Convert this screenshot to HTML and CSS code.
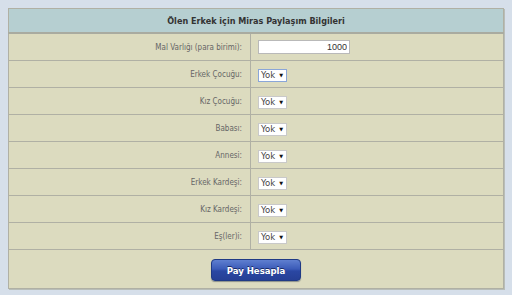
FILE: index.html
```html
<!DOCTYPE html>
<html>
<head>
<meta charset="utf-8">
<link rel="stylesheet" href="styles.css">
</head>
<body>
<table class="form">
  <tr><th colspan="2" class="title">Ölen Erkek için Miras Paylaşım Bilgileri</th></tr>
  <tr><td class="lbl">Mal Varlığı (para birimi):</td><td class="val"><input class="amount" type="text" value="1000"></td></tr>
  <tr><td class="lbl">Erkek Çocuğu:</td><td class="val"><span class="sel focus">Yok<i>▼</i></span></td></tr>
  <tr><td class="lbl">Kız Çocuğu:</td><td class="val"><span class="sel">Yok<i>▼</i></span></td></tr>
  <tr><td class="lbl">Babası:</td><td class="val"><span class="sel">Yok<i>▼</i></span></td></tr>
  <tr><td class="lbl">Annesi:</td><td class="val"><span class="sel">Yok<i>▼</i></span></td></tr>
  <tr><td class="lbl">Erkek Kardeşi:</td><td class="val"><span class="sel">Yok<i>▼</i></span></td></tr>
  <tr><td class="lbl">Kız Kardeşi:</td><td class="val"><span class="sel">Yok<i>▼</i></span></td></tr>
  <tr><td class="lbl">Eş(ler)i:</td><td class="val"><span class="sel">Yok<i>▼</i></span></td></tr>
  <tr><td colspan="2" class="btnrow"><button class="btn">Pay Hesapla</button></td></tr>
</table>
</body>
</html>
```
FILE: styles.css
```css
html, body { margin: 0; padding: 0; }
body {
  background: #d6dfea;
  padding: 8px;
  font-family: "DejaVu Sans Condensed", "DejaVu Sans", sans-serif;
  width: 496px;
}
.form {
  width: 496px;
  border-collapse: collapse;
  border: 1px solid #a9aba0;
  box-shadow: 1px 1px 0 #b8bdb8;
}
.form td, .form th {
  border: 1px solid #b0b0a4;
  padding: 0;
}
.title {
  background: #b6cfd1;
  height: 23px;
  font-size: 9px;
  font-weight: bold;
  color: #333;
  text-align: center;
  border-bottom: 2px solid #a9aba0 !important;
}
.lbl, .val, .btnrow { background: #dcdbbf; }
.lbl {
  width: 233px;
  height: 26px;
  text-align: right;
  padding-right: 8px !important;
  font-size: 8px;
  color: #666;
}
.val { padding-left: 7px !important; }
.amount {
  display: block;
  box-sizing: border-box;
  width: 92px;
  height: 14px;
  margin: 0;
  padding: 0 2px;
  border: 1px solid #b9b9b9;
  background: #fff;
  text-align: right;
  font-family: "Liberation Sans Narrow", "Liberation Sans", sans-serif;
  font-size: 9px;
  color: #333;
  outline: none;
}
.sel {
  display: inline-flex;
  align-items: center;
  box-sizing: border-box;
  width: 29px;
  height: 13px;
  background: #fff;
  border: 1px solid #c9c9c9;
  font-family: "DejaVu Sans", sans-serif;
  font-size: 8.5px;
  color: #444;
  padding-left: 2px;
  vertical-align: middle;
}
.sel.focus { border-color: #8aa6d8; }
.sel i {
  font-style: normal;
  font-size: 5px;
  margin-left: 4px;
  color: #111;
}
.btnrow {
  height: 38px;
  text-align: center;
}
.btn {
  width: 90px;
  height: 22px;
  border: 1px solid #1f3a85;
  border-radius: 4px;
  background: linear-gradient(#5f7fd0 0%, #3b5bb8 45%, #2a47a3 55%, #263f95 100%);
  color: #fff;
  font-family: "DejaVu Sans Condensed", "DejaVu Sans", sans-serif;
  font-weight: bold;
  font-size: 9.5px;
  padding: 0;
  margin-top: 2px;
  text-shadow: 0 -1px 0 #1a2c66;
  box-shadow: 0 1px 1px #8a8f8a;
}
```
